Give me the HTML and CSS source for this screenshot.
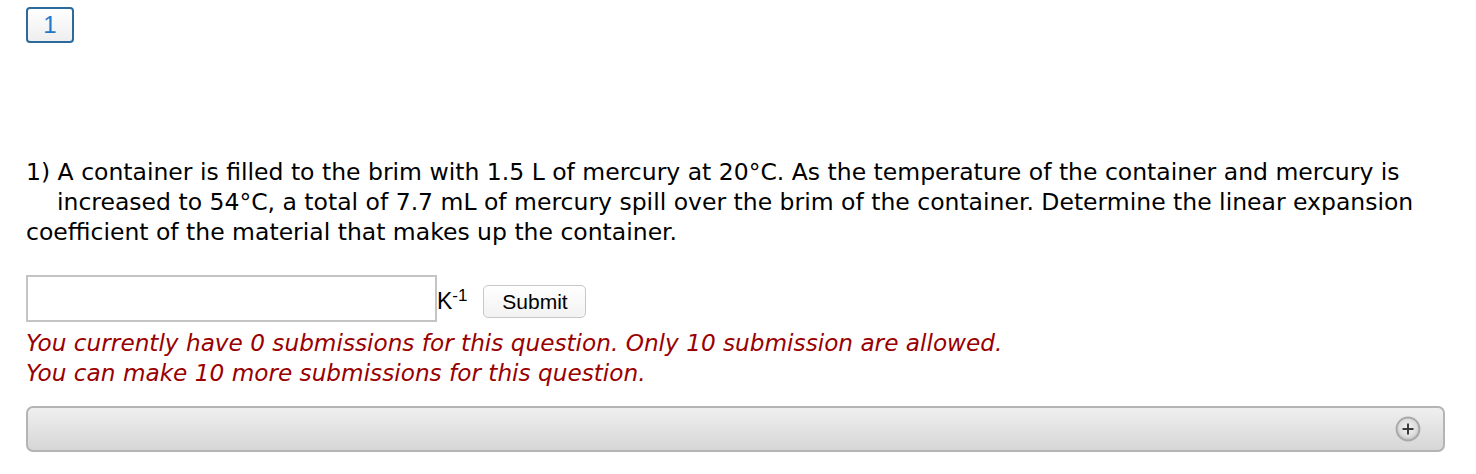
FILE: index.html
```html
<!DOCTYPE html><html lang="en">
<head>
  <meta charset="UTF-8">
  <title>Question 1</title>
  <link rel="stylesheet" href="styles.css">
</head>
<body>
  <div class="page">
    <div class="nav">
      <button class="qnum">1</button>
    </div>

    <div class="question">
      <p class="prompt">1) A container is filled to the brim with 1.5 L of mercury at 20&deg;C. As the temperature of the container and mercury is<br><span class="indent">increased to 54&deg;C, a total of 7.7 mL of mercury spill over the brim of the container. Determine the linear expansion</span><br>coefficient of the material that makes up the container.</p>

      <div class="answer">
        <input class="answer-input" type="text">
        <span class="unit">K<sup>-1</sup></span>
        <button class="submit">Submit</button>
      </div>

      <p class="status">You currently have 0 submissions for this question. Only 10 submission are allowed.<br>You can make 10 more submissions for this question.</p>

      <div class="panel">
        <span class="toggle">
          <svg width="26" height="26" viewBox="0 0 26 26">
            <defs>
              <radialGradient id="g" cx="50%" cy="45%" r="55%">
                <stop offset="0%" stop-color="#f4f4f4"/>
                <stop offset="70%" stop-color="#dcdcdc"/>
                <stop offset="100%" stop-color="#b8b8b8"/>
              </radialGradient>
            </defs>
            <circle cx="13" cy="13" r="11.5" fill="url(#g)" stroke="#a8a8a8" stroke-width="1.8"/>
            <path d="M13 7.5v11M7.5 13h11" stroke="#3a3a3a" stroke-width="2"/>
          </svg>
        </span>
      </div>
    </div>
  </div>
</body>
</html>
```

FILE: styles.css
```css
* {
  box-sizing: border-box;
  margin: 0;
  padding: 0;
}

body {
  font-family: 'DejaVu Sans', sans-serif;
  background: #fff;
  color: #000;
}

.page {
  padding: 7px 32px 0 26px;
}

.nav {
  height: 150px;
}

.qnum {
  width: 48px;
  height: 36px;
  border: 2px solid #2c6a9c;
  border-radius: 4px;
  background: linear-gradient(#ffffff, #eeeeee);
  color: #1f78c8;
  font-family: 'Liberation Sans', Arial, sans-serif;
  font-size: 24px;
  line-height: 32px;
}

.prompt {
  font-size: 23.5px;
  line-height: 30px;
}

.indent {
  padding-left: 31px;
}

.answer {
  display: flex;
  align-items: flex-start;
  margin-top: 28px;
  font-family: 'Liberation Sans', Arial, sans-serif;
}

.answer-input {
  width: 411px;
  height: 47px;
  border: 2px solid #c4c4c4;
  background: #fff;
}

.unit {
  font-size: 23px;
  padding-top: 14px;
  line-height: 24px;
}

.unit sup {
  font-size: 17px;
  position: relative;
  top: -8px;
  vertical-align: baseline;
}

.submit {
  margin: 10px 0 0 16px;
  width: 103px;
  height: 33px;
  border: 1px solid #c8c8c8;
  border-radius: 5px;
  background: linear-gradient(#ffffff, #f2f2f2);
  font-family: 'Liberation Sans', Arial, sans-serif;
  font-size: 21px;
  color: #000;
}

.status {
  margin-top: 6px;
  font-size: 23.2px;
  line-height: 30px;
  font-style: italic;
  color: #990000;
}

.panel {
  margin-top: 18px;
  width: 1419px;
  height: 46px;
  border: 2px solid #b4b4b4;
  border-radius: 7px;
  background: linear-gradient(#efefef, #d6d6d6);
  display: flex;
  justify-content: flex-end;
  align-items: center;
  padding-right: 22px;
}

.toggle {
  display: flex;
}
```
